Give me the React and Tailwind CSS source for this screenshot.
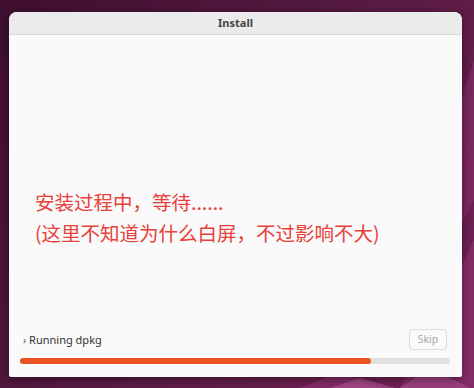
import React from 'react';

const Wallpaper = () => (
  <svg className="absolute inset-0 h-full w-full" viewBox="0 0 474 388" preserveAspectRatio="none">
    <defs>
      <linearGradient id="bg" x1="0" y1="0" x2="1" y2="0.6">
        <stop offset="0" stopColor="#3f0f30" />
        <stop offset="0.55" stopColor="#561a40" />
        <stop offset="1" stopColor="#6e2152" />
      </linearGradient>
    </defs>
    <rect width="474" height="388" fill="url(#bg)" />
    <polygon points="474,60 474,200 440,260 455,120" fill="#8a2f6c" opacity="0.55" />
    <polygon points="474,240 474,388 400,388 430,330" fill="#933474" opacity="0.6" />
    <polygon points="300,388 340,372 380,388" fill="#8c3070" opacity="0.7" />
    <polygon points="400,388 430,368 470,388" fill="#a4488a" opacity="0.7" />
    <polygon points="330,388 360,378 395,388" fill="#b25797" opacity="0.6" />
  </svg>
);

const App = () => {
  const progress = 81.6;

  return (
    <div className="relative h-[388px] w-[474px] overflow-hidden">
      <Wallpaper />
      <div className="relative pl-[9px] pr-[12px] pt-[12px] pb-[11px] h-full">
        <div className="flex h-full flex-col overflow-hidden rounded-t-[8px] rounded-b-[2px] bg-[#fafafa] shadow-[0_2px_10px_rgba(0,0,0,0.45)]">
          <div className="flex h-[23px] items-center justify-center border-b border-[#d9d9d9] bg-[#ebebeb]">
            <span className="text-[11px] font-bold text-[#444444] [font-family:'Noto_Sans',sans-serif]">Install</span>
          </div>

          <div className="flex-1 pl-[26px] pt-[151px]">
            <div className="text-[19.5px] leading-[31px] text-[#e8403a] [font-family:'Noto_Sans_CJK_SC',sans-serif]">
              <p>安装过程中，等待......</p>
              <p>(这里不知道为什么白屏，不过影响不大)</p>
            </div>
          </div>

          <div className="px-[11px] pb-[13px] pr-[12px]">
            <div className="flex items-end justify-between">
              <div className="mb-[2px] flex items-center gap-[3px] pl-[3px] text-[11px] text-[#333333] [font-family:'Noto_Sans',sans-serif]">
                <span className="text-[10px] leading-none text-[#555]">›</span>
                <span>Running dpkg</span>
              </div>
              <button className="mr-[3px] h-[21px] w-[38px] rounded-[4px] border border-[#dcdcdc] bg-[#fafafa] text-[10.5px] text-[#a8a8a8] [font-family:'Noto_Sans',sans-serif]">
                Skip
              </button>
            </div>
            <div className="mt-[8px] h-[6px] w-full rounded-full bg-[#e1e1e1]">
              <div className="h-full rounded-full bg-[#e95420]" style={{ width: `${progress}%` }} />
            </div>
          </div>
        </div>
      </div>
    </div>
  );
};

export default App;
